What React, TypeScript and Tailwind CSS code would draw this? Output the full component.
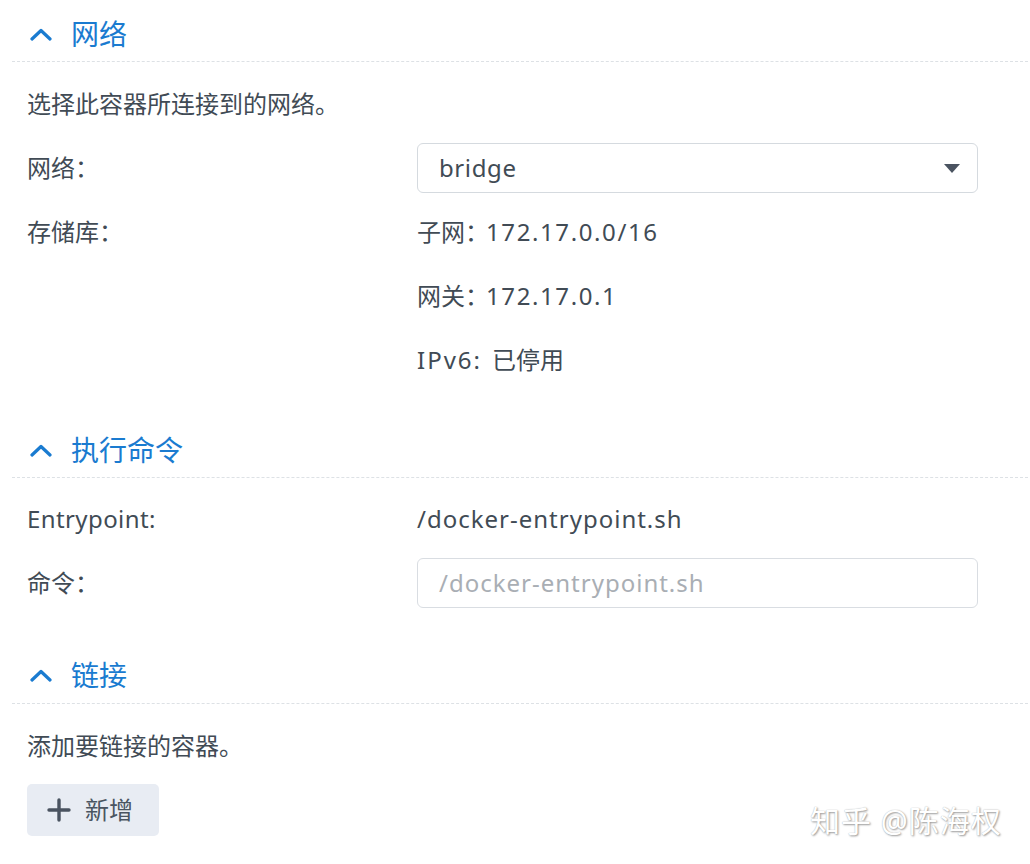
import React from "react";

const font = { fontFamily: '"Noto Sans", "Noto Sans CJK SC", sans-serif' };

function Chevron() {
  return (
    <svg width="24" height="14" viewBox="0 0 24 14" className="shrink-0">
      <path d="M3 12 L12 3.5 L21 12" fill="none" stroke="#1a7bd0" strokeWidth="3.2" strokeLinecap="round" strokeLinejoin="round" />
    </svg>
  );
}

function Heading({ title, top }: { title: string; top: string }) {
  return (
    <div className={`${top} border-b border-dashed border-[#dde1e5]`}>
      <div className="flex items-center h-[48px] pl-[17px] gap-[18px]">
        <Chevron />
        <span className="text-[28px] text-[#1a7bd0] leading-none">{title}</span>
      </div>
    </div>
  );
}

function Row({ label, children }: { label?: React.ReactNode; children?: React.ReactNode }) {
  return (
    <div className="flex items-center h-[64px] pl-[15px]">
      <div className="w-[390px] shrink-0">{label}</div>
      <div className="flex-1 flex items-center">{children}</div>
    </div>
  );
}

export default function App() {
  return (
    <div className="relative w-[1030px] h-[864px] bg-white overflow-hidden text-[24px] text-[#414b55]" style={font}>
      <div className="px-[12px] pr-[2px]">
        <Heading title="网络" top="pt-[10px] pb-[3px]" />
        <div className="mt-[10px]">
          <div className="flex items-center h-[64px] pl-[15px]">选择此容器所连接到的网络。</div>
          <Row label="网络：">
            <div className="w-[561px] h-[50px] border border-[#d5dadf] rounded-[6px] flex items-center justify-between pl-[21px] pr-[17px]">
              <span className="tracking-[0.6px]">bridge</span>
              <svg width="16" height="9" viewBox="0 0 16 9">
                <path d="M0 0 H16 L8 9 Z" fill="#4a5360" />
              </svg>
            </div>
          </Row>
          <Row label="存储库：">
            <span>子网：</span>
            <span className="tracking-[1.6px] -ml-[3px]">172.17.0.0/16</span>
          </Row>
          <Row>
            <span>网关：</span>
            <span className="tracking-[1.6px] -ml-[3px]">172.17.0.1</span>
          </Row>
          <Row>
            <span className="tracking-[2px]">IPv6:</span>
            <span className="ml-[10px]">已停用</span>
          </Row>
        </div>

        <Heading title="执行命令" top="pt-[34px] pb-[3px]" />
        <div className="mt-[9px]">
          <Row label={<span className="tracking-[0.4px]">Entrypoint:</span>}>
            <span className="tracking-[1px]">/docker-entrypoint.sh</span>
          </Row>
          <Row label="命令：">
            <div className="w-[561px] h-[50px] border border-[#d9dde2] rounded-[6px] flex items-center pl-[21px] text-[#a9aeb4] tracking-[1px]">
              /docker-entrypoint.sh
            </div>
          </Row>
        </div>

        <Heading title="链接" top="pt-[36px] pb-[4px]" />
        <div className="mt-[10px]">
          <div className="flex items-center h-[64px] pl-[15px]">添加要链接的容器。</div>
          <div className="pl-[15px] mt-[6px]">
            <div className="w-[132px] h-[52px] rounded-[5px] bg-[#e8ecf3] flex items-center pl-[20px] gap-[14px] text-[#4a5561]">
              <svg width="24" height="24" viewBox="0 0 24 24">
                <path d="M12 2 V22 M2 12 H22" stroke="#4a5360" strokeWidth="3.4" strokeLinecap="round" />
              </svg>
              <span>新增</span>
            </div>
          </div>
        </div>
      </div>

      <div
        className="absolute left-[810px] top-[806px] text-[30px] text-white leading-none tracking-[1px]"
        style={{ textShadow: "1px 1px 2px #9a9a9a, 0 0 1px #b0b0b0" }}
      >
        知乎 @陈海权
      </div>
    </div>
  );
}
